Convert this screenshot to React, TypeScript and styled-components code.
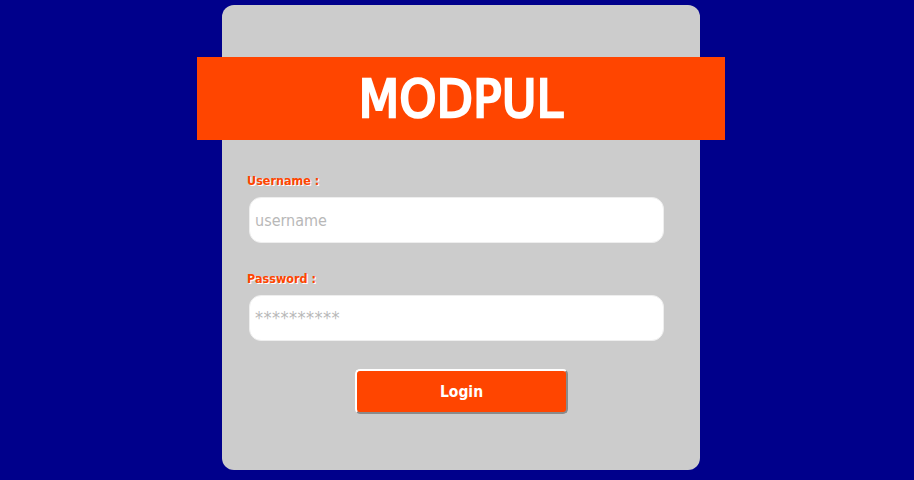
import styled, { createGlobalStyle } from 'styled-components'

const GlobalStyle = createGlobalStyle`
  html, body {
    margin: 0;
    padding: 0;
    background: #00008b;
  }
  body {
    font-family: "DejaVu Sans Condensed", "DejaVu Sans", sans-serif;
  }
`

const Page = styled.div`
  display: flex;
  justify-content: center;
  min-height: 480px;
  padding: 5px 0 0 8px;
  box-sizing: border-box;
`

const Card = styled.form`
  width: 478px;
  height: 465px;
  box-sizing: border-box;
  background: #cccccc;
  border-radius: 12px;
  padding: 52px 0 0;
  display: flex;
  flex-direction: column;
`

const Banner = styled.h1`
  margin: 0 -25px;
  height: 83px;
  background: #ff4500;
  color: #fff;
  display: flex;
  align-items: center;
  justify-content: center;
  font-family: "DejaVu Sans Condensed", "DejaVu Sans", sans-serif;
  font-weight: normal;
  font-size: 52px;
  letter-spacing: 0.5px;
  -webkit-text-stroke: 2.6px #fff;
`

const Fields = styled.div`
  display: flex;
  flex-direction: column;
  padding: 33px 36px 0 25px;
  gap: 28px;
`

const Field = styled.div`
  display: flex;
  flex-direction: column;
`

const Label = styled.label`
  display: block;
  height: 16px;
  line-height: 16px;
  margin-bottom: 8px;
  color: #ff4500;
  font-weight: bold;
  font-size: 12.5px;
  text-shadow: 1px 1px 0 #fff;
`

const Input = styled.input`
  margin-left: 2px;
  height: 46px;
  box-sizing: border-box;
  border: 1px solid #eeeeee;
  border-radius: 12px;
  background: #fff;
  padding: 0 5px;
  font-family: "DejaVu Sans Condensed", "DejaVu Sans", sans-serif;
  font-size: 16px;
  color: #333;
  outline: none;
  &::placeholder {
    color: #b8b8b8;
  }
  &[type='password']::placeholder {
    font-size: 18px;
    letter-spacing: 0.4px;
  }
`

const Submit = styled.button`
  align-self: center;
  margin: 28px 0 0 1px;
  width: 213px;
  height: 45px;
  background: #ff4500;
  color: #fff;
  border: 2px solid;
  border-color: #fff #8a8a8a #8a8a8a #fff;
  border-radius: 5px;
  font-family: "DejaVu Sans Condensed", "DejaVu Sans", sans-serif;
  font-weight: bold;
  font-size: 15.5px;
  cursor: pointer;
`

const App = () => {
  return (
    <>
      <GlobalStyle />
      <Page>
        <Card onSubmit={(e) => e.preventDefault()}>
          <Banner>MODPUL</Banner>
          <Fields>
            <Field>
              <Label htmlFor="username">Username :</Label>
              <Input id="username" type="text" placeholder="username" autoFocus />
            </Field>
            <Field>
              <Label htmlFor="password">Password :</Label>
              <Input id="password" type="password" placeholder="**********" />
            </Field>
          </Fields>
          <Submit type="submit">Login</Submit>
        </Card>
      </Page>
    </>
  )
}

export default App
